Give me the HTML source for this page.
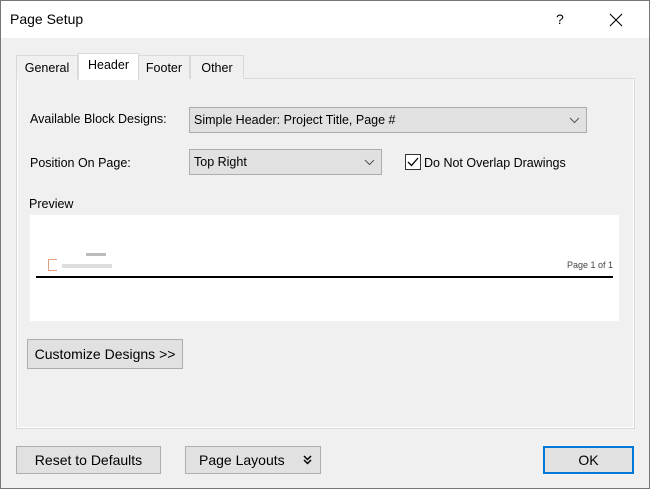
<!DOCTYPE html>
<html><head><style>
*{box-sizing:border-box;margin:0;padding:0}
body{width:650px;height:489px;overflow:hidden;font-family:"Liberation Sans",sans-serif;font-size:12.5px;color:#000;background:#f0f0f0;position:relative}
.a{position:absolute}
.win{left:0;top:0;width:650px;height:489px;border:1px solid #777;background:#f0f0f0}
.title{left:1px;top:1px;width:648px;height:37px;background:#fff}
.btn{position:absolute;background:#e1e1e1;border:1px solid #adadad;text-align:center;display:flex;align-items:center;justify-content:center;font-size:14px}
.combo{position:absolute;background:#e1e1e1;border:1px solid #adadad;padding-left:4px;display:flex;align-items:center}
.tab{position:absolute;border:1px solid #d9d9d9;border-bottom:none;background:#f0f0f0;text-align:center;padding-top:5px}
</style></head><body>
<div class="a win"></div>
<div class="a title"></div>
<div class="a" style="left:10px;top:11px;font-size:14px">Page Setup</div>
<div class="a" style="left:556px;top:11px;font-size:14px">?</div>
<svg class="a" style="left:609px;top:13px" width="14" height="14"><path d="M1 1L13 13M13 1L1 13" stroke="#000" stroke-width="1.1"/></svg>

<div class="a" style="left:16px;top:78px;width:619px;height:351px;border:1px solid #d9d9d9;background:#f0f0f0"></div>
<div class="tab" style="left:16px;top:55px;width:62px;height:24px">General</div>
<div class="tab" style="left:138px;top:55px;width:52px;height:24px">Footer</div>
<div class="tab" style="left:190px;top:55px;width:54px;height:24px">Other</div>
<div class="tab" style="left:78px;top:53px;width:61px;height:27px;background:#fff;padding-top:4px;border-color:#d9d9d9">Header</div>
<div class="a" style="left:17px;top:79px;width:617px;height:349px;border:1px solid #fff;border-top:none"></div>

<div class="a" style="left:30px;top:112px">Available Block Designs:</div>
<div class="combo" style="left:189px;top:107px;width:398px;height:26px">Simple Header: Project Title, Page #
<svg class="a" style="right:6px;top:9px" width="11" height="7"><path d="M1 1L5.5 5.5L10 1" stroke="#555" fill="none"/></svg></div>

<div class="a" style="left:30px;top:156px">Position On Page:</div>
<div class="combo" style="left:189px;top:149px;width:193px;height:26px">Top Right
<svg class="a" style="right:6px;top:9px" width="11" height="7"><path d="M1 1L5.5 5.5L10 1" stroke="#555" fill="none"/></svg></div>
<div class="a" style="left:405px;top:154px;width:16px;height:16px;border:1px solid #333;background:#fff"></div>
<svg class="a" style="left:405px;top:154px" width="16" height="16"><path d="M3 8L6.5 11.5L13 4" stroke="#000" stroke-width="1.3" fill="none"/></svg>
<div class="a" style="left:424px;top:156px">Do Not Overlap Drawings</div>

<div class="a" style="left:29px;top:197px">Preview</div>
<div class="a" style="left:30px;top:215px;width:589px;height:106px;background:#fff"></div>
<div class="a" style="left:36px;top:276px;width:577px;height:2px;background:#000"></div>
<div class="a" style="left:48px;top:259px;width:9px;height:12px;border:1px solid #e0a080;border-right:none"></div>
<div class="a" style="left:86px;top:253px;width:20px;height:3px;background:#bbb"></div>
<div class="a" style="left:62px;top:264px;width:50px;height:4px;background:#ddd"></div>
<div class="a" style="left:567px;top:260px;font-size:9px;color:#444">Page 1 of 1</div>

<div class="btn" style="left:27px;top:339px;width:156px;height:30px">Customize Designs &gt;&gt;</div>
<div class="btn" style="left:16px;top:446px;width:145px;height:28px">Reset to Defaults</div>
<div class="btn" style="left:185px;top:446px;width:136px;height:28px;justify-content:flex-start;padding-left:13px">Page Layouts
<svg class="a" style="left:117px;top:8px" width="9" height="10"><path d="M1 1L4.5 4.5L8 1M1 5L4.5 8.5L8 5" stroke="#000" stroke-width="1.5" fill="none"/></svg></div>
<div class="btn" style="left:543px;top:446px;width:91px;height:28px;border:2px solid #0078d7">OK</div>
</body></html>
